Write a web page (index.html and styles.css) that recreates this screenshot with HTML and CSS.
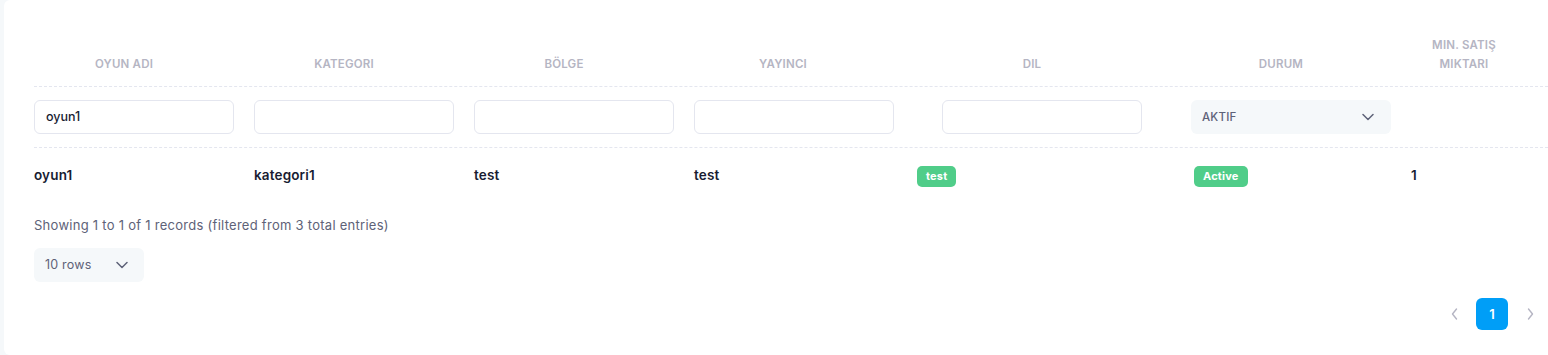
FILE: index.html
```html
<!DOCTYPE html>
<html lang="tr">
<head>
<meta charset="utf-8">
<title>Oyunlar</title>
<link rel="stylesheet" href="styles.css">
</head>
<body>
<div class="card">
  <div class="table">
    <div class="row head">
      <div class="th">OYUN ADI</div>
      <div class="th">KATEGORI</div>
      <div class="th">BÖLGE</div>
      <div class="th">YAYINCI</div>
      <div class="th">DIL</div>
      <div class="th">DURUM</div>
      <div class="th">MIN. SATIŞ MIKTARI</div>
    </div>
    <div class="row filters">
      <div class="fc"><div class="input">oyun1</div></div>
      <div class="fc"><div class="input"></div></div>
      <div class="fc"><div class="input"></div></div>
      <div class="fc"><div class="input"></div></div>
      <div class="fc fc-dil"><div class="input"></div></div>
      <div class="fc"><div class="select"><span>AKTIF</span><svg class="chev" viewBox="0 0 12 8" width="12" height="8"><path d="M1 1.5 6 6.5 11 1.5" fill="none" stroke="#5e6278" stroke-width="1.5" stroke-linecap="round" stroke-linejoin="round"/></svg></div></div>
      <div class="fc"></div>
    </div>
    <div class="row data">
      <div class="td">oyun1</div>
      <div class="td">kategori1</div>
      <div class="td">test</div>
      <div class="td">test</div>
      <div class="td"><span class="badge">test</span></div>
      <div class="td"><span class="badge badge-active">Active</span></div>
      <div class="td">1</div>
    </div>
  </div>
  <div class="info">Showing 1 to 1 of 1 records (filtered from 3 total entries)</div>
  <div class="length"><span>10 rows</span><svg class="chev" viewBox="0 0 12 8" width="12" height="8"><path d="M1 1.5 6 6.5 11 1.5" fill="none" stroke="#5e6278" stroke-width="1.5" stroke-linecap="round" stroke-linejoin="round"/></svg></div>
  <div class="pager">
    <span class="pg-arrow"><svg viewBox="0 0 7 12" width="7" height="12"><path d="M5.5 1 1.5 6 5.5 11" fill="none" stroke="#b5b5c3" stroke-width="1.4" stroke-linecap="round" stroke-linejoin="round"/></svg></span>
    <span class="pg-num">1</span>
    <span class="pg-arrow"><svg viewBox="0 0 7 12" width="7" height="12"><path d="M1.5 1 5.5 6 1.5 11" fill="none" stroke="#b5b5c3" stroke-width="1.4" stroke-linecap="round" stroke-linejoin="round"/></svg></span>
  </div>
</div>
</body>
</html>
```

FILE: styles.css
```css
html, body {
  margin: 0;
  padding: 0;
}
body {
  background: #f5f8fa;
  font-family: "Inter", "Open Sans", sans-serif;
  color: #181c32;
  padding-left: 4px;
  height: 355px;
  overflow: hidden;
}
.card {
  background: #ffffff;
  border-radius: 6px 0 0 6px;
  padding-left: 30px;
  height: 355px;
  box-sizing: border-box;
  overflow: hidden;
}
.row {
  display: grid;
  grid-template-columns: 220px 220px 220px 223px 274px 220px 160px;
}
.head {
  height: 87px;
  box-sizing: border-box;
  align-items: end;
  border-bottom: 1px dashed #e4e6ef;
  padding-bottom: 12px;
}
.th {
  font-size: 11.5px;
  font-weight: 600;
  letter-spacing: 0.2px;
  color: #b5b5c3;
  line-height: 19px;
  text-align: center;
  padding-right: 40px;
}
.th:nth-child(4) { padding-right: 45px; }
.th:nth-child(5) { padding-right: 44px; }
.th:nth-child(7) { padding-right: 54px; }
.filters {
  height: 61px;
  box-sizing: border-box;
  padding-top: 13px;
  border-bottom: 1px dashed #e4e6ef;
}
.fc-dil { padding-left: 25px; }
.input {
  width: 200px;
  height: 34px;
  box-sizing: border-box;
  border: 1px solid #e4e6ef;
  border-radius: 6px;
  padding: 0 11px;
  font-size: 12.5px;
  font-weight: 500;
  line-height: 32px;
  color: #181c32;
}
.select {
  width: 200px;
  height: 34px;
  box-sizing: border-box;
  background: #f5f8fa;
  border-radius: 6px;
  padding: 0 17px 0 11px;
  display: flex;
  align-items: center;
  justify-content: space-between;
  font-size: 11.5px;
  font-weight: 500;
  letter-spacing: 0.2px;
  color: #5e6278;
}
.data {
  padding: 16px 0 16px;
  align-items: center;
}
.td {
  font-size: 13.5px;
  font-weight: 600;
  letter-spacing: 0.15px;
  line-height: 22px;
  color: #181c32;
}
.badge {
  display: inline-block;
  background: #50cd89;
  color: #ffffff;
  font-size: 11px;
  font-weight: 700;
  letter-spacing: 0.2px;
  line-height: 21px;
  padding: 0 9px;
  border-radius: 5px;
  vertical-align: middle;
}
.badge-active { margin-left: 3px; }
.info {
  margin-top: 12px;
  font-size: 13px;
  letter-spacing: 0.27px;
  line-height: 20px;
  color: #5e6278;
}
.length {
  margin-top: 13px;
  width: 110px;
  height: 34px;
  box-sizing: border-box;
  background: #f5f8fa;
  border-radius: 6px;
  padding: 0 16px 0 11px;
  display: flex;
  align-items: center;
  justify-content: space-between;
  font-size: 12.5px;
  letter-spacing: 0.2px;
  color: #5e6278;
}
.pager {
  margin-top: 16px;
  display: flex;
  justify-content: flex-end;
  align-items: center;
  padding-right: 2px;
}
.pg-arrow {
  width: 32px;
  height: 32px;
  display: flex;
  align-items: center;
  justify-content: center;
}
.pg-num {
  width: 32px;
  height: 32px;
  margin: 0 6px;
  border-radius: 6px;
  background: #009ef7;
  color: #ffffff;
  font-size: 13px;
  font-weight: 600;
  display: flex;
  align-items: center;
  justify-content: center;
}
```
